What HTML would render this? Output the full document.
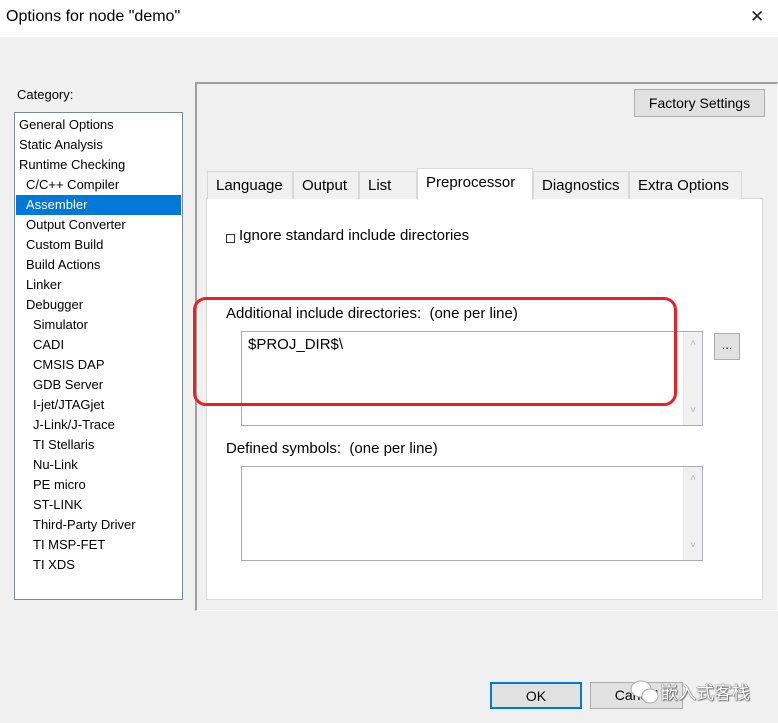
<!DOCTYPE html>
<html><head><meta charset="utf-8"><style>
*{margin:0;padding:0;box-sizing:border-box}
body{width:778px;height:723px;background:#f0f0f0;font-family:"Liberation Sans","Noto Sans CJK SC",sans-serif;font-size:14px;color:#000;position:relative;overflow:hidden}
.a{position:absolute}
.title{left:0;top:0;width:778px;height:37px;background:#fff}
.list{left:14px;top:112px;width:169px;height:488px;background:#fff;border:1px solid #828790}
.list div{position:absolute;left:4px;font-size:13px;line-height:20px;height:20px;white-space:nowrap}
.sel{background:#0078d7;color:#fff;left:1px!important;width:165px;padding-left:10px}
.tab{top:171px;height:28px;border:1px solid #d9d9d9;border-bottom:none;background:#f0f0f0;font-size:15px;padding-left:8px;line-height:27px}
.ta{background:#fff;border:1px solid #abadb3}
.sb{position:absolute;right:0;top:0;width:19px;height:100%;background:#f0f0f0;border-left:1px solid #e8e8e8;color:#b0b0b0;font-size:10px;text-align:center}
.btn{background:#e1e1e1;border:1px solid #adadad;text-align:center;font-size:14px}
</style></head><body>
<div class="a title"></div>
<div class="a" style="left:6px;top:8px;font-size:16px">Options for node "demo"</div>
<div class="a" style="left:750px;top:7px;font-size:17px;color:#222">✕</div>
<div class="a" style="left:17px;top:87px;font-size:13px">Category:</div>
<div class="a list">
<div style="top:2px">General Options</div>
<div style="top:22px">Static Analysis</div>
<div style="top:42px">Runtime Checking</div>
<div style="top:62px;left:11px">C/C++ Compiler</div>
<div class="sel" style="top:82px">Assembler</div>
<div style="top:102px;left:11px">Output Converter</div>
<div style="top:122px;left:11px">Custom Build</div>
<div style="top:142px;left:11px">Build Actions</div>
<div style="top:162px;left:11px">Linker</div>
<div style="top:182px;left:11px">Debugger</div>
<div style="top:202px;left:18px">Simulator</div>
<div style="top:222px;left:18px">CADI</div>
<div style="top:242px;left:18px">CMSIS DAP</div>
<div style="top:262px;left:18px">GDB Server</div>
<div style="top:282px;left:18px">I-jet/JTAGjet</div>
<div style="top:302px;left:18px">J-Link/J-Trace</div>
<div style="top:322px;left:18px">TI Stellaris</div>
<div style="top:342px;left:18px">Nu-Link</div>
<div style="top:362px;left:18px">PE micro</div>
<div style="top:382px;left:18px">ST-LINK</div>
<div style="top:402px;left:18px">Third-Party Driver</div>
<div style="top:422px;left:18px">TI MSP-FET</div>
<div style="top:442px;left:18px">TI XDS</div>
</div>
<div class="a" style="left:195px;top:82px;width:583px;height:529px;border:1px solid #fff;border-left:2px solid #a0a0a0;border-top:2px solid #a0a0a0"></div>
<div class="a btn" style="left:634px;top:89px;width:131px;height:28px;line-height:26px">Factory Settings</div>
<div class="a" style="left:206px;top:198px;width:557px;height:402px;background:#fff;border:1px solid #d9d9d9"></div>
<div class="a tab" style="left:207px;width:86px">Language</div>
<div class="a tab" style="left:293px;width:66px">Output</div>
<div class="a tab" style="left:359px;width:58px">List</div>
<div class="a tab" style="left:417px;top:168px;height:32px;width:116px;background:#fff;line-height:28px">Preprocessor</div>
<div class="a tab" style="left:533px;width:96px">Diagnostics</div>
<div class="a tab" style="left:629px;width:113px">Extra Options</div>
<div class="a" style="left:226px;top:234px;width:9px;height:9px;border:1px solid #333;background:#fff"></div>
<div class="a" style="left:239px;top:227px;font-size:15px">Ignore standard include directories</div>
<div class="a" style="left:226px;top:305px;font-size:15px">Additional include directories:&nbsp; (one per line)</div>
<div class="a ta" style="left:241px;top:331px;width:462px;height:95px"><div style="position:absolute;left:6px;top:4px;font-size:15px">$PROJ_DIR$\</div><div class="sb"><div style="margin-top:6px">˄</div><div style="margin-top:56px">˅</div></div></div>
<div class="a btn" style="left:714px;top:333px;width:26px;height:27px;line-height:22px;font-size:13px">...</div>
<div class="a" style="left:226px;top:440px;font-size:15px">Defined symbols:&nbsp; (one per line)</div>
<div class="a ta" style="left:241px;top:466px;width:462px;height:95px"><div class="sb"><div style="margin-top:6px">˄</div><div style="margin-top:56px">˅</div></div></div>
<div class="a" style="left:193px;top:297px;width:484px;height:109px;border:3.5px solid #e8202a;border-radius:13px"></div>
<div class="a btn" style="left:490px;top:682px;width:92px;height:27px;line-height:25px;border:2px solid #0078d7">OK</div>
<div class="a btn" style="left:590px;top:682px;width:93px;height:27px;line-height:25px">Cancel</div>
<div class="a" style="left:630px;top:679px;width:30px;height:26px"><svg width="30" height="26"><ellipse cx="11" cy="10" rx="10" ry="8" fill="#fff" stroke="#aaa"/><ellipse cx="20" cy="17" rx="8" ry="7" fill="#fff" stroke="#aaa"/></svg></div>
<div class="a" style="left:660px;top:679px;font-size:18px;color:#fff;text-shadow:0 0 1px #555,0 0 1px #555,1px 1px 1px #777">嵌入式客栈</div>
</body></html>
